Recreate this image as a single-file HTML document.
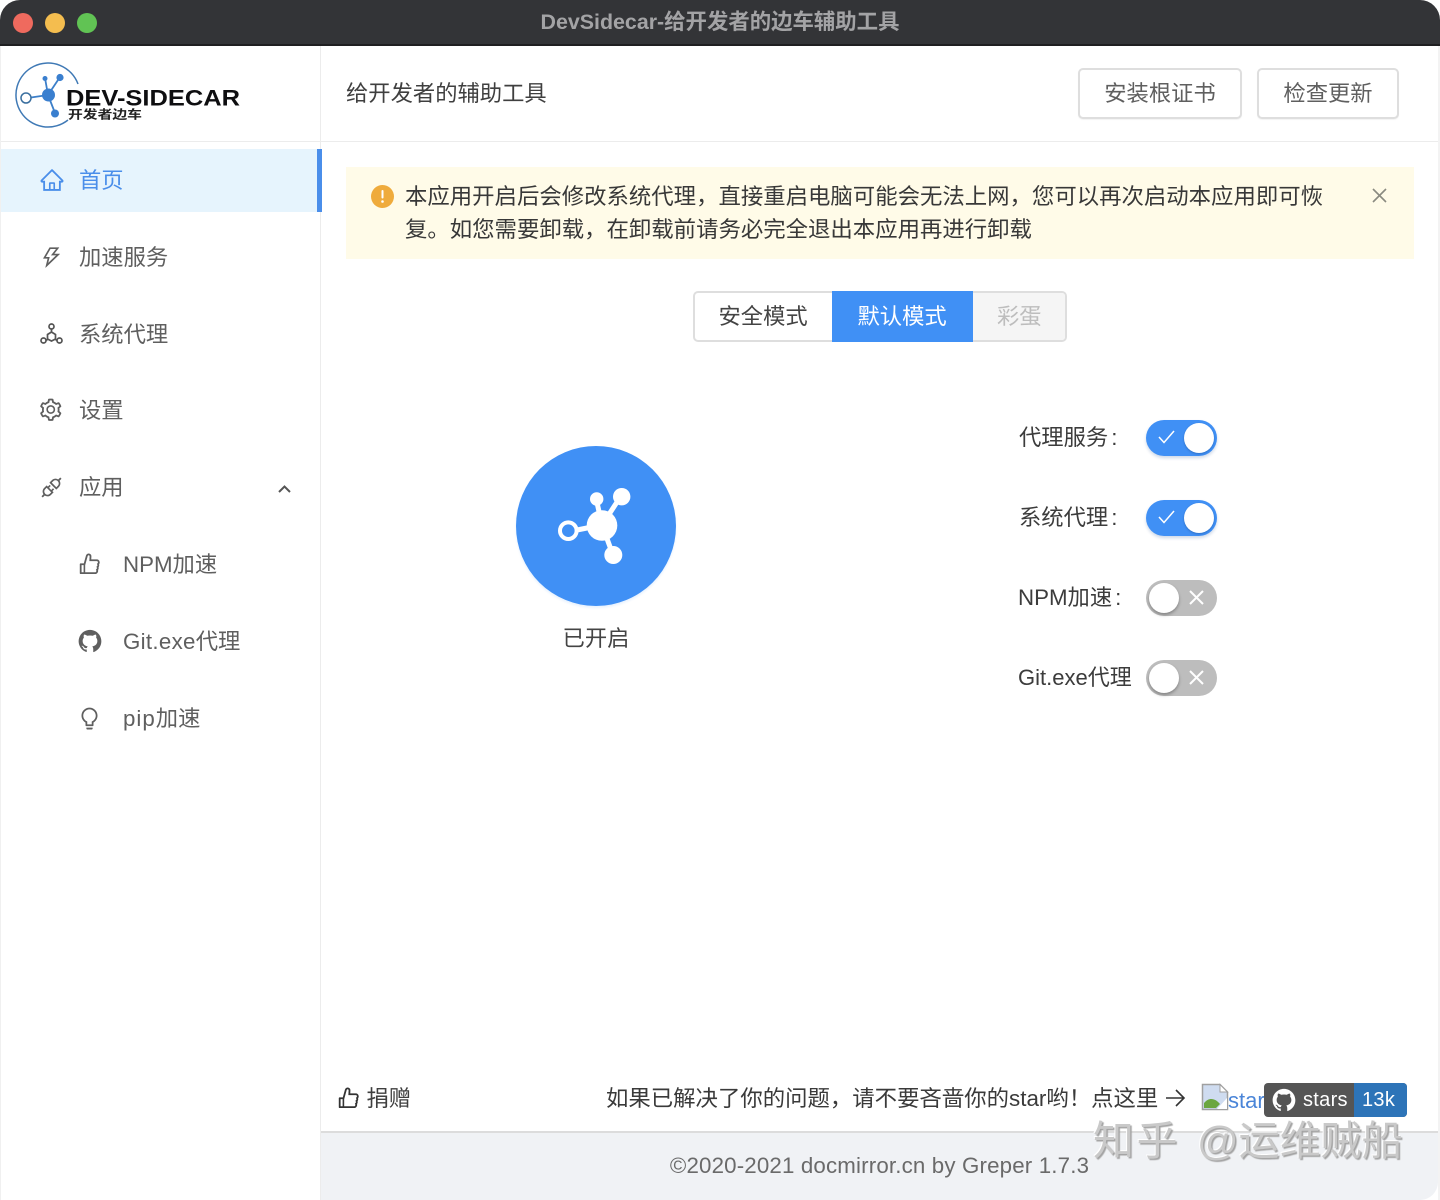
<!DOCTYPE html>
<html lang="zh">
<head>
<meta charset="utf-8">
<title>DevSidecar</title>
<style>
html,body{margin:0;padding:0;background:#fff}
body{width:1440px;height:1200px;overflow:hidden;position:relative;font-family:"Liberation Sans","Noto Sans CJK SC",sans-serif;font-size:22.3px;color:#3a3a3a}
.a{position:absolute;white-space:nowrap;line-height:33px}
.bx{position:absolute;box-sizing:border-box}
svg{position:absolute;overflow:visible}
.menu{color:#5f5f5f}
.btn{position:absolute;box-sizing:border-box;border:2px solid #dedede;border-radius:5px;background:#fff;color:#5f5f5f;text-align:center;line-height:47px;box-shadow:0 1px 1px rgba(0,0,0,.05)}
.sw{position:absolute;left:1146px;width:71px;height:36px;border-radius:18px}
.sw.on{background:#4090f5;box-shadow:0 2px 3px rgba(0,60,140,.2)}
.sw.off{background:#bdbdbd}
.th{position:absolute;top:3px;width:30px;height:30px;border-radius:50%;background:#fff}
.on .th{left:38px;box-shadow:0 1px 2px rgba(0,40,90,.3)}
.off .th{left:3px;box-shadow:0 2px 3px rgba(0,0,0,.3)}
.lbl{color:#3c3c3c}
.wm{position:absolute;white-space:nowrap;line-height:50px;font-size:41px;color:#c9c9c9;text-shadow:1.500px 1.500px 1px #a3a3a3,-1px -1px 0 #fff}
</style>
</head>
<body>
<!-- title bar -->
<div class="bx" style="left:0;top:0;width:1440px;height:46px;background:#333437;border-bottom:2px solid #1f1f21;border-radius:20px 20px 0 0"></div>
<div class="bx" style="left:13px;top:13px;width:20px;height:20px;border-radius:50%;background:#ef6a5e"></div>
<div class="bx" style="left:45px;top:13px;width:20px;height:20px;border-radius:50%;background:#f4bd4f"></div>
<div class="bx" style="left:77px;top:13px;width:20px;height:20px;border-radius:50%;background:#61c354"></div>
<div class="a" style="left:0;width:1440px;text-align:center;top:6px;color:#a3a3a5;font-weight:700;font-size:21.4px">DevSidecar-给开发者的边车辅助工具</div>

<!-- frame lines -->
<div class="bx" style="left:320px;top:46px;width:1px;height:1154px;background:#ececec"></div>
<div class="bx" style="left:0;top:141px;width:1440px;height:1px;background:#ececec"></div>
<div class="bx" style="left:0;top:46px;width:1px;height:1154px;background:#f0f0f0"></div>
<div class="bx" style="left:1438px;top:46px;width:2px;height:1154px;background:#f3f3f3"></div>

<!-- logo -->
<svg style="left:0;top:46px" width="320" height="95" viewBox="0 46 320 95">
<path d="M78 84A32 32 0 1 0 68 120" fill="none" stroke="#3f79b5" stroke-width="1.500"/>
<g stroke="#3c7fc9" stroke-width="1.800" fill="none"><path d="M31 97.500L48 95M48 95L45 78M48 95L60 77M48 95L55 113"/></g>
<circle cx="48.500" cy="95" r="6.500" fill="#3a7fcf"/><circle cx="26" cy="98" r="5" fill="#fff" stroke="#3a6f9f" stroke-width="1.500"/>
<circle cx="45" cy="78.500" r="2.500" fill="#3a7fcf"/><circle cx="60" cy="77.500" r="3.600" fill="#3a7fcf"/><circle cx="55" cy="113.500" r="4" fill="#3a7fcf"/>
<text x="66" y="105.500" font-family="Liberation Sans" font-weight="700" font-size="22" textLength="174" lengthAdjust="spacingAndGlyphs" fill="#0e0e10">DEV-SIDECAR</text>
<text x="68" y="118.500" font-family="Noto Sans CJK SC" font-weight="700" font-size="12" fill="#222" textLength="74" lengthAdjust="spacingAndGlyphs">开发者边车</text>
</svg>
<div class="a" style="left:346px;top:77px;color:#3f3f3f">给开发者的辅助工具</div>
<div class="btn" style="left:1078px;top:68px;width:164px;height:51px">安装根证书</div>
<div class="btn" style="left:1257px;top:68px;width:142px;height:51px">检查更新</div>

<!-- menu -->
<div class="bx" style="left:1px;top:149px;width:319px;height:63px;background:#e6f4fd"></div>
<div class="bx" style="left:317px;top:149px;width:5px;height:63px;background:#4a8eea"></div>
<svg style="left:38.500px;top:167px" width="26" height="26" viewBox="0 0 1024 1024" fill="#4a8eea"><path d="M946.500 505L560.100 118.800l-25.900-25.900a31.500 31.500 0 0 0-44.400 0L77.500 505a63.900 63.900 0 0 0-18.800 46c.4 35.200 29.700 63.300 64.900 63.300h42.500V940h691.800V614.300h43.400c17.100 0 33.200-6.700 45.300-18.800a63.600 63.600 0 0 0 18.700-45.300c0-17-6.700-33.100-18.800-45.200zM568 868H456V664h112v204zm217.900-325.700V868H632V640c0-22.100-17.900-40-40-40H432c-22.100 0-40 17.900-40 40v228H238.100V542.300h-96l370-369.700 23.100 23.100L882 542.300h-96.100z"/></svg>
<div class="a" style="left:79px;top:164px;color:#4a8eea">首页</div>

<svg style="left:38.500px;top:244.500px" width="25" height="25" viewBox="0 0 1024 1024" fill="#5f5f5f"><path d="M848 359.300H627.700L825.800 109c4.100-5.300.4-13-6.300-13H436c-2.800 0-5.500 1.500-6.900 4L170 547.500c-3.100 5.300.7 12 6.900 12h174.400l-89.400 357.600c-1.900 7.800 7.500 13.300 13.300 7.700L853.500 373c5.200-4.900 1.700-13.700-5.500-13.700zM378.200 732.500l60.300-241H281.100l189.600-327.400h224.600L487 427.400h211L378.200 732.500z"/></svg>
<div class="a menu" style="left:79px;top:241px">加速服务</div>

<svg style="left:40px;top:322px" width="23" height="23" viewBox="0 0 23 23" fill="none" stroke="#555" stroke-width="1.700"><circle cx="11.500" cy="4.500" r="2.500"/><circle cx="3.500" cy="18.500" r="2.500"/><circle cx="19.500" cy="18.500" r="2.500"/><path d="M11.500 7V10M7.500 12.500L11.500 10L15.500 12.500V17L11.500 19L7.500 17ZM6 18H7.500M15.500 18H17"/></svg>
<div class="a menu" style="left:79px;top:318px">系统代理</div>

<svg style="left:38.250px;top:397px" width="25.500" height="25.500" viewBox="0 0 1024 1024" fill="#5f5f5f"><path d="M924.800 625.700l-65.500-56c3.100-19 4.700-38.400 4.700-57.800s-1.600-38.800-4.700-57.800l65.500-56a32.030 32.030 0 0 0 9.300-35.200l-.9-2.600a443.740 443.740 0 0 0-79.700-137.900l-1.800-2.100a32.120 32.120 0 0 0-35.100-9.500l-81.300 28.900c-30-24.600-63.500-44-99.700-57.600l-15.700-85a32.050 32.050 0 0 0-25.800-25.700l-2.700-.5c-52.100-9.400-106.900-9.400-159 0l-2.700.5a32.050 32.050 0 0 0-25.800 25.700l-15.800 85.400a351.860 351.860 0 0 0-99 57.400l-81.900-29.100a32 32 0 0 0-35.100 9.500l-1.800 2.100a446.020 446.020 0 0 0-79.700 137.900l-.9 2.600c-4.500 12.500-.8 26.500 9.300 35.200l66.300 56.600c-3.100 18.800-4.600 38-4.600 57.100 0 19.200 1.500 38.400 4.600 57.100L99 625.500a32.030 32.030 0 0 0-9.300 35.200l.9 2.600c18.100 50.400 44.900 96.900 79.700 137.900l1.800 2.100a32.120 32.120 0 0 0 35.100 9.500l81.900-29.100c29.800 24.500 63.100 43.900 99 57.400l15.800 85.400a32.050 32.050 0 0 0 25.800 25.700l2.700.5a449.400 449.400 0 0 0 159 0l2.700-.5a32.050 32.050 0 0 0 25.800-25.700l15.700-85a350 350 0 0 0 99.700-57.600l81.300 28.900a32 32 0 0 0 35.100-9.500l1.800-2.100c34.800-41.100 61.600-87.500 79.700-137.900l.9-2.600c4.500-12.300.8-26.300-9.300-35zM788.300 465.900c2.500 15.100 3.800 30.600 3.800 46.100s-1.300 31-3.800 46.100l-6.600 40.100 74.700 63.900a370.030 370.030 0 0 1-42.600 73.600L721 702.800l-31.400 25.800c-23.900 19.600-50.500 35-79.300 45.800l-38.100 14.300-17.900 97a377.500 377.500 0 0 1-85 0l-17.900-97.200-37.800-14.500c-28.500-10.800-55-26.200-78.700-45.700l-31.400-25.900-93.400 33.200c-17-22.900-31.200-47.600-42.600-73.600l75.500-64.500-6.500-40c-2.400-14.900-3.700-30.300-3.700-45.500 0-15.300 1.200-30.600 3.700-45.500l6.500-40-75.500-64.500c11.300-26.100 25.600-50.700 42.600-73.600l93.400 33.200 31.400-25.900c23.700-19.500 50.200-34.900 78.700-45.700l37.900-14.300 17.900-97.200c28.100-3.200 56.800-3.200 85 0l17.900 97 38.100 14.300c28.700 10.800 55.400 26.200 79.300 45.800l31.400 25.800 92.800-32.900c17 22.900 31.200 47.600 42.600 73.600L781.800 426l6.500 39.900zM512 326c-97.200 0-176 78.800-176 176s78.800 176 176 176 176-78.800 176-176-78.800-176-176-176zm79.200 255.200A111.600 111.600 0 0 1 512 614c-29.900 0-58-11.700-79.200-32.800A111.600 111.600 0 0 1 400 502c0-29.900 11.700-58 32.800-79.200C454 401.600 482.100 390 512 390c29.900 0 58 11.600 79.200 32.800A111.600 111.600 0 0 1 624 502c0 29.900-11.700 58-32.800 79.200z"/></svg>
<div class="a menu" style="left:79px;top:394px">设置</div>

<svg style="left:38.500px;top:474.500px" width="25" height="25" viewBox="0 0 1024 1024" fill="#5f5f5f"><path d="M917.700 148.800l-42.400-42.400c-1.600-1.600-3.600-2.300-5.700-2.300s-4.100.8-5.700 2.300l-76.100 76.100a199.270 199.270 0 0 0-112.100-34.300c-51.200 0-102.400 19.500-141.500 58.600L432.300 308.700a8.030 8.030 0 0 0 0 11.300L704 591.700c1.600 1.600 3.600 2.300 5.700 2.300 2 0 4.100-.8 5.700-2.300l101.900-101.900c68.900-69 77-175.700 24.300-253.500l76.100-76.100c3.100-3.200 3.100-8.300 0-11.400zM769.100 441.700l-59.400 59.400-186.800-186.800 59.400-59.400c24.900-24.900 58.100-38.700 93.400-38.700 35.300 0 68.400 13.700 93.400 38.700 24.900 24.900 38.700 58.100 38.700 93.400 0 35.300-13.800 68.400-38.700 93.400zm-190.200 105a8.030 8.030 0 0 0-11.300 0L501 613.300 410.700 523l66.700-66.700c3.100-3.100 3.100-8.200 0-11.300L441 408.600a8.030 8.030 0 0 0-11.300 0L363 475.300l-43-43a7.850 7.850 0 0 0-5.700-2.300c-2 0-4.100.8-5.700 2.300L206.800 534.200c-68.900 69-77 175.700-24.300 253.500l-76.100 76.100a8.030 8.030 0 0 0 0 11.300l42.400 42.400c1.600 1.600 3.600 2.300 5.700 2.300s4.100-.8 5.700-2.300l76.100-76.100c33.700 22.900 72.900 34.300 112.100 34.300 51.200 0 102.400-19.500 141.500-58.600l101.900-101.900c3.100-3.100 3.100-8.200 0-11.300l-43-43 66.700-66.700c3.100-3.100 3.100-8.200 0-11.300l-36.600-36.200zM441.700 769.100a131.320 131.320 0 0 1-93.400 38.700c-35.300 0-68.400-13.700-93.400-38.700a131.320 131.320 0 0 1-38.700-93.400c0-35.300 13.700-68.400 38.700-93.400l59.400-59.400 186.800 186.800-59.400 59.400z"/></svg>
<div class="a menu" style="left:79px;top:471px">应用</div>
<svg style="left:277px;top:482px" width="15" height="12" viewBox="0 0 15 12" fill="none" stroke="#555" stroke-width="2"><path d="M2 10L7.500 4.500L13 10"/></svg>

<svg style="left:76.750px;top:551px" width="25.500" height="25.500" viewBox="0 0 1024 1024" fill="#5f5f5f"><path d="M885.900 533.700c16.800-22.200 26.100-49.400 26.100-77.700 0-44.900-25.100-87.400-65.500-111.100a67.670 67.670 0 0 0-34.300-9.300H572.400l6-122.900c1.400-29.700-9.100-57.900-29.500-79.400A106.620 106.620 0 0 0 471 99.900c-52 0-98 35-111.800 85.100l-85.900 311H144c-17.700 0-32 14.300-32 32v364c0 17.700 14.300 32 32 32h601.300c9.200 0 18.200-1.800 26.500-5.400 47.600-20.300 78.300-66.800 78.300-118.400 0-12.600-1.800-25-5.400-37 16.800-22.200 26.100-49.400 26.100-77.700 0-12.600-1.800-25-5.400-37 16.800-22.200 26.100-49.400 26.100-77.700-.2-12.600-2-25.100-5.600-37.100zM184 852V568h81v284h-81zm636.400-353l-21.900 19 13.900 25.400a56.200 56.200 0 0 1 6.900 27.300c0 16.500-7.200 32.200-19.600 43l-21.900 19 13.900 25.400a56.200 56.200 0 0 1 6.900 27.300c0 16.500-7.200 32.200-19.600 43l-21.900 19 13.900 25.400a56.200 56.200 0 0 1 6.900 27.300c0 22.400-13.200 42.600-33.600 51.800H329V564.800l99.500-360.500a44.100 44.100 0 0 1 42.200-32.300c7.600 0 15.100 2.200 21.100 6.700 9.900 7.400 15.200 18.600 14.600 30.500l-9.600 198.400h314.400C829 418.500 840 436.900 840 456c0 16.500-7.200 32.100-19.600 43z"/></svg>
<div class="a menu" style="left:123px;top:548px">NPM加速</div>

<svg style="left:76.500px;top:628px" width="26" height="26" viewBox="0 0 1024 1024" fill="#5f5f5f"><path d="M511.600 76.300C264.300 76.200 64 276.400 64 523.500 64 718.900 189.300 885 363.800 946c23.500 5.900 19.900-10.800 19.900-22.200v-77.500c-135.700 15.900-141.200-73.900-150.300-88.900C215 726 171.500 718 184.500 703c30.900-15.900 62.400 4 98.900 57.900 26.400 39.100 77.900 32.500 104 26 5.700-23.500 17.900-44.500 34.700-60.800-140.600-25.200-199.200-111-199.200-213 0-49.500 16.300-95 48.300-131.700-20.400-60.500 1.900-112.300 4.900-120 58.100-5.200 118.500 41.600 123.200 45.300 33-8.900 70.700-13.600 112.900-13.600 42.400 0 80.200 4.900 113.500 13.900 11.300-8.600 67.300-48.800 121.300-43.900 2.900 7.700 24.700 58.300 5.500 118 32.400 36.800 48.900 82.700 48.900 132.300 0 102.200-59 188.100-200 212.900a127.500 127.500 0 0 1 38.100 91v112.500c.8 9 0 17.900 15 17.900 177.100-59.700 304.600-227 304.600-424.100 0-247.200-200.400-447.300-447.500-447.300z"/></svg>
<div class="a menu" style="left:123px;top:625px"><span style="letter-spacing:.3px">Git.exe</span>代理</div>

<svg style="left:77px;top:706px" width="25" height="25" viewBox="0 0 1024 1024" fill="#5f5f5f"><path d="M632 888H392c-4.400 0-8 3.600-8 8v32c0 17.700 14.300 32 32 32h192c17.700 0 32-14.300 32-32v-32c0-4.400-3.600-8-8-8zM512 64c-181.100 0-328 146.900-328 328 0 121.400 66 227.400 164 284.100V792c0 17.700 14.300 32 32 32h264c17.700 0 32-14.300 32-32V676.100c98-56.700 164-162.700 164-284.100 0-181.100-146.900-328-328-328zm127.900 549.800L604 634.600V752H420V634.600l-35.900-20.800C305.400 568.300 256 484.500 256 392c0-141.400 114.600-256 256-256s256 114.600 256 256c0 92.500-49.400 176.300-128.100 221.800z"/></svg>
<div class="a menu" style="left:123px;top:702px"><span style="letter-spacing:1px">pip</span>加速</div>

<!-- alert -->
<div class="bx" style="left:346px;top:167px;width:1068px;height:92px;background:#fffbe8"></div>
<svg style="left:371px;top:185px" width="23" height="23" viewBox="0 0 23 23"><circle cx="11.500" cy="11.500" r="11.500" fill="#efab3c"/><rect x="10.500" y="5" width="2" height="8.500" rx="1" fill="#fff"/><circle cx="11.500" cy="16.500" r="1.300" fill="#fff"/></svg>
<div class="a" style="left:405px;top:180px;color:#383838;font-size:22.4px">本应用开启后会修改系统代理，直接重启电脑可能会无法上网，您可以再次启动本应用即可恢</div>
<div class="a" style="left:405px;top:213px;color:#383838;font-size:22.4px">复。如您需要卸载，在卸载前请务必完全退出本应用再进行卸载</div>
<svg style="left:1372px;top:188px" width="15" height="15" viewBox="0 0 15 15" fill="none" stroke="#8a8a80" stroke-width="1.600"><path d="M1 1L14 14M14 1L1 14"/></svg>

<!-- radio group -->
<div class="bx" style="left:693px;top:291px;width:374px;height:51px;border:2px solid #dedede;border-radius:5px;background:#fff"></div>
<div class="bx" style="left:973px;top:293px;width:92px;height:47px;background:#f5f5f5;border-radius:0 3px 3px 0"></div>
<div class="bx" style="left:832px;top:291px;width:141px;height:51px;background:#4090f5"></div>
<div class="a" style="left:718.500px;top:300px;color:#444">安全模式</div>
<div class="a" style="left:857.500px;top:300px;color:#fff">默认模式</div>
<div class="a" style="left:997px;top:300px;color:#bdbdbd">彩蛋</div>

<!-- big circle -->
<div class="bx" style="left:516px;top:446px;width:160px;height:160px;border-radius:50%;background:#4090f5;box-shadow:0 2px 2px rgba(64,144,245,.12)"></div>
<svg style="left:516px;top:446px" width="160" height="160" viewBox="516 446 160 160">
<g stroke="#fff" stroke-width="5" fill="none"><path d="M577 530L602 525M602 525L596 498M602 525L621 496M602 525L613 555"/></g>
<circle cx="602" cy="525.500" r="15.300" fill="#fff"/><circle cx="596.700" cy="499" r="6.700" fill="#fff"/><circle cx="621.700" cy="496.700" r="8.700" fill="#fff"/><circle cx="613.300" cy="555" r="9" fill="#fff"/>
<circle cx="568.300" cy="530.700" r="8.300" fill="#4090f5" stroke="#fff" stroke-width="4"/>
</svg>
<div class="a" style="left:516px;width:160px;text-align:center;top:622px;color:#444">已开启</div>

<!-- switches -->
<div class="a lbl" style="left:1019px;top:421px">代理服务<span style="margin-left:3px">:</span></div>
<div class="sw on" style="top:420px"><svg style="left:12px;top:10px" width="17" height="14" viewBox="0 0 17 14" fill="none" stroke="#fff" stroke-width="1.500"><path d="M1 7L6 12.500L16 1"/></svg><div class="th"></div></div>
<div class="a lbl" style="left:1019px;top:501px">系统代理<span style="margin-left:3px">:</span></div>
<div class="sw on" style="top:500px"><svg style="left:12px;top:10px" width="17" height="14" viewBox="0 0 17 14" fill="none" stroke="#fff" stroke-width="1.500"><path d="M1 7L6 12.500L16 1"/></svg><div class="th"></div></div>
<div class="a lbl" style="left:1018px;top:581px">NPM加速<span style="margin-left:3px">:</span></div>
<div class="sw off" style="top:580px"><svg style="left:43.500px;top:11px" width="13" height="13" viewBox="0 0 13 13" fill="none" stroke="#fff" stroke-width="2"><path d="M0 0L13 13M13 0L0 13"/></svg><div class="th"></div></div>
<div class="a lbl" style="left:1018px;top:661px;font-size:22px">Git.exe代理</div>
<div class="sw off" style="top:660px"><svg style="left:43.500px;top:11px" width="13" height="13" viewBox="0 0 13 13" fill="none" stroke="#fff" stroke-width="2"><path d="M0 0L13 13M13 0L0 13"/></svg><div class="th"></div></div>

<!-- bottom row -->
<svg style="left:335.750px;top:1084.750px" width="25.500" height="25.500" viewBox="0 0 1024 1024" fill="#333"><path d="M885.900 533.700c16.800-22.200 26.100-49.400 26.100-77.700 0-44.900-25.100-87.400-65.500-111.100a67.670 67.670 0 0 0-34.300-9.300H572.400l6-122.900c1.400-29.700-9.100-57.900-29.500-79.400A106.620 106.620 0 0 0 471 99.900c-52 0-98 35-111.800 85.100l-85.900 311H144c-17.700 0-32 14.300-32 32v364c0 17.700 14.300 32 32 32h601.300c9.200 0 18.200-1.800 26.500-5.400 47.600-20.300 78.300-66.800 78.300-118.400 0-12.600-1.800-25-5.400-37 16.800-22.200 26.100-49.400 26.100-77.700 0-12.600-1.800-25-5.400-37 16.800-22.200 26.100-49.400 26.100-77.700-.2-12.600-2-25.100-5.600-37.100zM184 852V568h81v284h-81zm636.400-353l-21.900 19 13.900 25.400a56.200 56.200 0 0 1 6.900 27.300c0 16.500-7.200 32.200-19.600 43l-21.900 19 13.900 25.400a56.200 56.200 0 0 1 6.900 27.300c0 16.500-7.200 32.200-19.600 43l-21.900 19 13.900 25.400a56.200 56.200 0 0 1 6.900 27.300c0 22.400-13.200 42.600-33.600 51.800H329V564.800l99.500-360.500a44.100 44.100 0 0 1 42.200-32.300c7.600 0 15.100 2.200 21.100 6.700 9.900 7.400 15.200 18.600 14.600 30.500l-9.600 198.400h314.400C829 418.500 840 436.900 840 456c0 16.500-7.200 32.100-19.600 43z"/></svg>
<div class="a" style="left:366.500px;top:1082px;color:#3f3f3f">捐赠</div>
<div class="a" style="left:606px;top:1082px;color:#3a3a3a;font-size:22.4px">如果已解决了你的问题，请不要吝啬你的star哟！点这里</div>
<svg style="left:1165px;top:1088px" width="20" height="20" viewBox="0 0 20 20" fill="none" stroke="#333" stroke-width="1.600"><path d="M1 10H19M11 2L19 10L11 18"/></svg>
<svg style="left:1202px;top:1084px" width="26" height="26" viewBox="0 0 26 26"><path d="M.5.5H18L25.500 8V25.500H.5Z" fill="#cfdcf0" stroke="#a0a0a0" stroke-width="1.500"/><path d="M18 .5V8H25.500Z" fill="#fff" stroke="#a0a0a0"/><path d="M2 24V19C7 13 13 14 18 20L14 24Z" fill="#6ba63f"/><path d="M15 25L25 14V25Z" fill="#fff"/></svg>
<div class="a" style="left:1228px;top:1084px;color:#4a85d8;font-size:22px;width:36px;overflow:hidden">star</div>
<div class="bx" style="left:1264px;top:1083px;width:143px;height:34px;border-radius:4px;background:#555;overflow:hidden">
<div class="bx" style="left:90px;top:0;width:53px;height:34px;background:#2d74b8"></div>
<svg style="left:7px;top:4px" width="26" height="26" viewBox="0 0 1024 1024" fill="#fff"><path d="M511.600 76.300C264.300 76.200 64 276.400 64 523.500 64 718.900 189.300 885 363.800 946c23.500 5.900 19.900-10.800 19.900-22.200v-77.500c-135.700 15.900-141.200-73.900-150.300-88.900C215 726 171.500 718 184.500 703c30.900-15.900 62.400 4 98.900 57.900 26.400 39.100 77.900 32.500 104 26 5.700-23.500 17.900-44.500 34.700-60.800-140.600-25.200-199.200-111-199.200-213 0-49.500 16.300-95 48.300-131.700-20.400-60.500 1.900-112.300 4.900-120 58.100-5.200 118.500 41.600 123.200 45.300 33-8.900 70.700-13.600 112.900-13.600 42.400 0 80.200 4.900 113.500 13.900 11.300-8.600 67.300-48.800 121.300-43.900 2.900 7.700 24.700 58.300 5.500 118 32.400 36.800 48.900 82.700 48.900 132.300 0 102.200-59 188.100-200 212.900a127.500 127.500 0 0 1 38.100 91v112.500c.8 9 0 17.900 15 17.900 177.100-59.700 304.600-227 304.600-424.100 0-247.200-200.400-447.300-447.500-447.300z"/></svg>
<div class="a" style="left:39px;top:0;line-height:34px;color:#fff;font-size:20px;letter-spacing:.3px">stars</div>
<div class="a" style="left:98px;top:0;line-height:34px;color:#fff;font-size:20px;letter-spacing:.3px">13k</div>
</div>

<!-- footer -->
<div class="bx" style="left:321px;top:1131px;width:1117px;height:69px;background:#f0f2f5;border-top:2px solid #dcdcdc;border-radius:0 0 18px 0"></div>
<div class="a" style="left:321px;width:1117px;text-align:center;top:1149px;color:#6a6a6a;letter-spacing:.16px">©2020-2021 docmirror.cn by Greper 1.7.3</div>

<!-- watermark -->
<div class="wm" style="left:1093px;top:1116px;letter-spacing:2.500px">知乎</div>
<div class="wm" style="left:1197px;top:1116px">@运维贼船</div>
</body>
</html>
